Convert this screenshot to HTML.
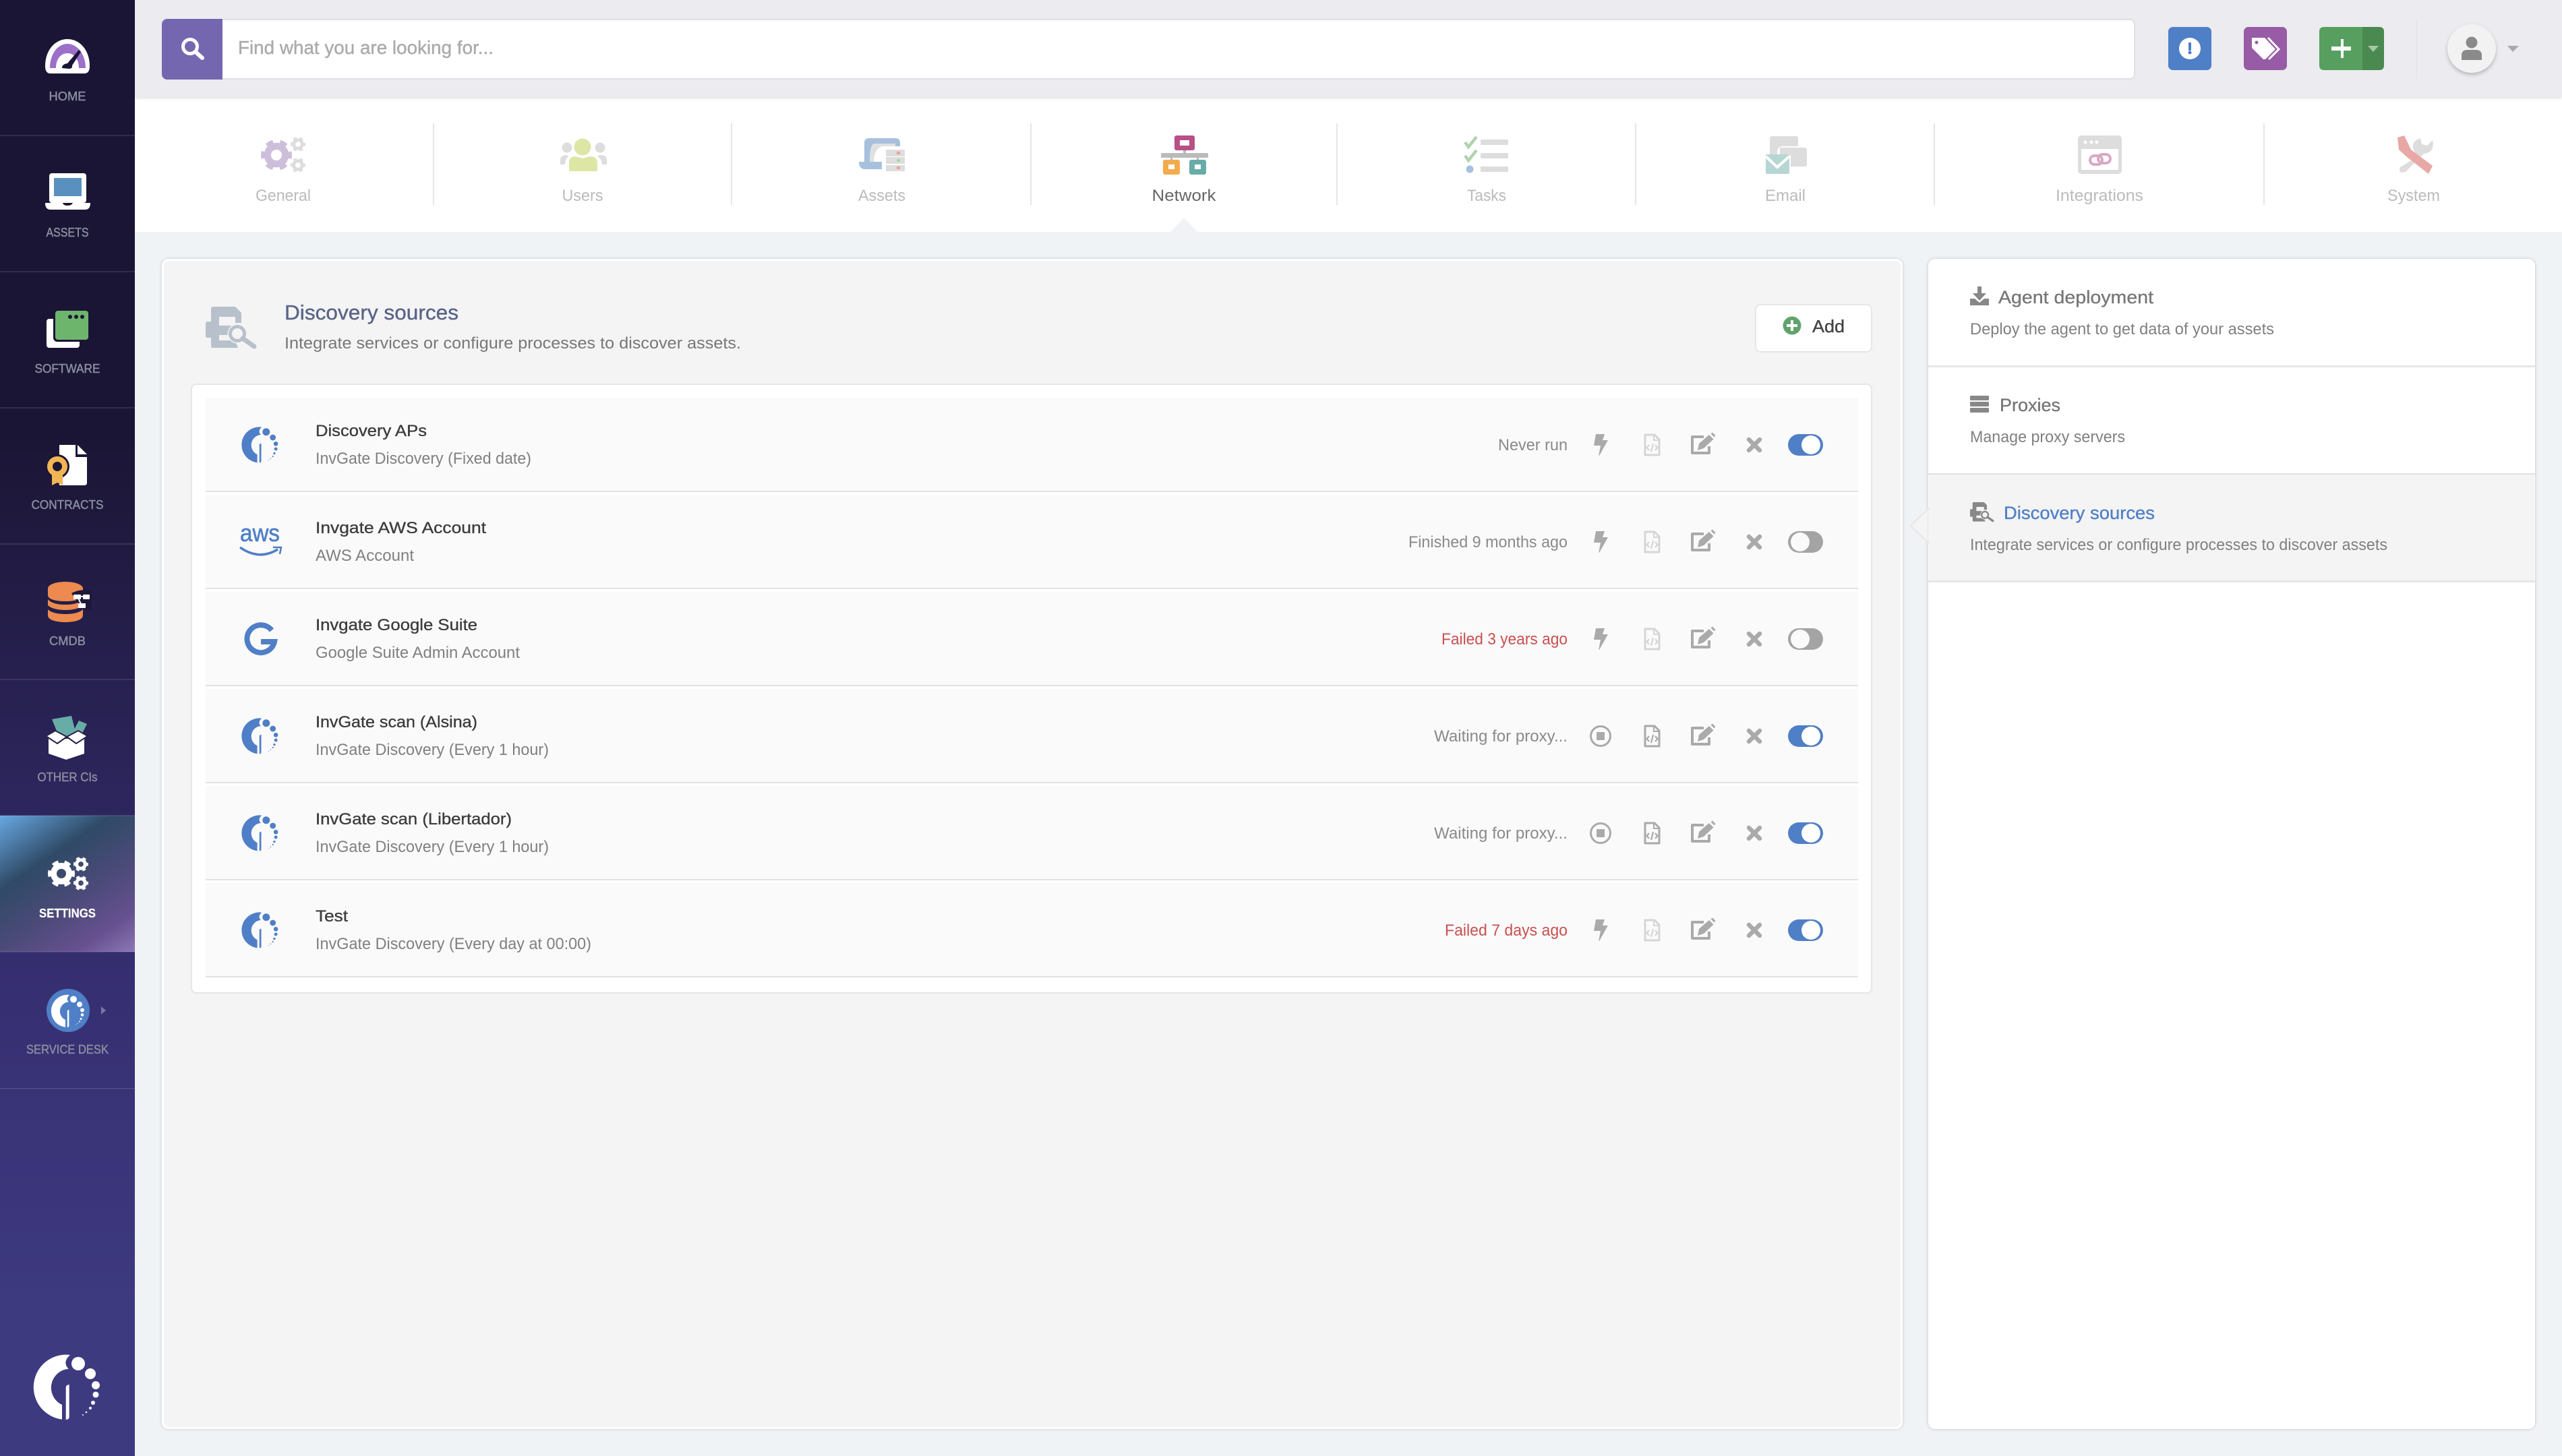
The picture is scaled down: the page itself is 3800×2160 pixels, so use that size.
<!DOCTYPE html>
<html lang="en"><head><meta charset="utf-8"><title>Discovery sources</title>
<style>
html,body{margin:0;padding:0;width:3800px;height:2160px;overflow:hidden;background:#eff3f6}
.a{position:absolute;box-sizing:border-box}
#side{left:0;top:0;width:200px;height:2160px;background:linear-gradient(180deg,#1b1535 0,#1b1535 30%,#362f72 68%,#3e3a80 90%,#3e3a80 100%)}
#set{left:0;top:1210px;width:200px;height:202px;background:linear-gradient(146deg,#68a8e2 0,#2f4a66 33%,#4a4a78 58%,#66508f 82%,#8d78b5 100%)}
.sd{left:0;width:200px;height:2px;background:rgba(255,255,255,.1)}
#top{left:200px;top:0;width:3600px;height:144px;background:#ebebf0;box-shadow:0 2px 4px rgba(0,0,0,.12);z-index:2}
#nav{left:200px;top:144px;width:3600px;height:200px;background:#fff}
.nd{top:183px;width:2px;height:121px;background:#e6e6e6}
#search{left:240px;top:28px;width:2927px;height:90px;background:#fff;border:2px solid #e0e0e4;border-radius:8px}
#sbtn{left:240px;top:28px;width:90px;height:90px;background:#7467b0;border-radius:8px 0 0 8px}
#main{left:240px;top:384px;width:2582px;height:1736px;background:#f4f4f4;border:3px solid #fff;border-radius:10px;box-shadow:0 0 5px rgba(0,0,0,.18)}
#card{left:283px;top:569px;width:2494px;height:905px;background:#fff;border:2px solid #e6e6e6;border-radius:8px}
.row{left:305px;width:2451px;background:#fafafa;border-bottom:2px solid #e2e2e2;height:140px}
#add{left:2603px;top:451px;width:174px;height:72px;background:#fff;border:2px solid #e6e6e6;border-radius:8px}
#right{left:2860px;top:384px;width:900px;height:1736px;background:#fff;border-radius:10px;box-shadow:0 0 5px rgba(0,0,0,.2)}
.rd{left:2860px;width:900px;height:3px;background:#e6e6e6}
#act{left:2861px;top:706px;width:898px;height:156px;background:#f4f4f4}
svg{position:absolute;left:0;top:0;z-index:3}
text{font-family:"Liberation Sans",Arial,sans-serif}
.sl{font-size:18px;fill:#8a8e9e;stroke:#8a8e9e;stroke-width:.45;text-anchor:middle}
.nl{font-size:24px;fill:#bbb;text-anchor:middle}
.t{font-size:24px;fill:#3c3c3c;stroke:#3c3c3c;stroke-width:.35}
.s{font-size:24px;fill:#808080}
.st{font-size:24px;fill:#8a8a8a;text-anchor:end}
.rt{font-size:27px;fill:#777;stroke:#777;stroke-width:.35}
</style></head><body>
<div class="a" id="side"></div>
<div class="a" id="set"></div>
<div class="a sd" style="top:200px"></div><div class="a sd" style="top:402px"></div><div class="a sd" style="top:604px"></div><div class="a sd" style="top:806px"></div><div class="a sd" style="top:1007px"></div><div class="a sd" style="top:1209px"></div><div class="a sd" style="top:1411px"></div><div class="a sd" style="top:1614px"></div>
<div class="a" id="nav"></div>
<div class="a nd" style="left:642px"></div><div class="a nd" style="left:1084px"></div><div class="a nd" style="left:1528px"></div><div class="a nd" style="left:1982px"></div><div class="a nd" style="left:2425px"></div><div class="a nd" style="left:2868px"></div><div class="a nd" style="left:3357px"></div>
<div class="a" id="top"></div>
<div class="a" id="search" style="z-index:3"></div>
<div class="a" id="sbtn" style="z-index:3"></div>
<div class="a" id="main"></div>
<div class="a" id="card"></div>
<div class="a row" style="top:590px"></div>
<div class="a row" style="top:734px"></div>
<div class="a row" style="top:878px"></div>
<div class="a row" style="top:1022px"></div>
<div class="a row" style="top:1166px"></div>
<div class="a row" style="top:1310px"></div>
<div class="a" id="add"></div>
<div class="a" id="right"></div>
<div class="a" id="act"></div>
<div class="a rd" style="top:542px"></div><div class="a rd" style="top:702px"></div><div class="a rd" style="top:861px"></div>

<svg width="3800" height="2160" viewBox="0 0 3800 2160" xmlns="http://www.w3.org/2000/svg">
<defs>
<g id="logo"><path d="M4-48A48 48 0 0 0-8 47.7V26A28 28 0 0 1 1.7-27.300Q-8-37 4-48Z"/><path d="M-2.300 0Q-2.300-3 2.700-4V44Q2.700 48-2.300 48Z"/><circle cx="16" cy="-35" r="10"/><circle cx="34" cy="-20" r="8"/><circle cx="42" cy="-3" r="6"/><circle cx="42" cy="11" r="4.500"/><circle cx="38" cy="23" r="3"/><circle cx="34" cy="31" r="2"/><circle cx="28" cy="37" r="1.300"/><circle cx="23" cy="41" r="1"/></g>
<g id="gear"><circle r="11.500" fill="none" stroke="currentColor" stroke-width="9"/><circle r="17" fill="none" stroke="currentColor" stroke-width="6" stroke-dasharray="9 8.800" stroke-dashoffset="4.500"/></g>
<g id="disc"><path d="M8 3Q8 0 11 0H44L53 9V24H44V15H20V28H38V42H20V50H44L48 61H11Q8 61 8 58V46H3Q0 46 0 43V25Q0 22 3 22H8Z" fill="currentColor"/><circle cx="47" cy="40" r="14.500" fill="#f4f4f4"/><circle cx="47" cy="40" r="10.500" fill="#f4f4f4" stroke="currentColor" stroke-width="5"/><path d="M55 47L72 59" stroke="currentColor" stroke-width="7" stroke-linecap="round"/></g>
<path id="bolt" d="M3 0H16L13 9H21L8 32Q7 32 7.500 30L10 17H0Z" fill="#aaa"/>
<g id="file"><path d="M2 1H16L23 8V31H2Z" fill="none" stroke="currentColor" stroke-width="3" stroke-linejoin="round"/><path d="M15 2V9H22" fill="none" stroke="currentColor" stroke-width="2"/><path d="M8 16L4.500 20 8 24M17 16L20.500 20 17 24M14 14L11 26" fill="none" stroke="currentColor" stroke-width="2.200"/></g>
<g id="edit"><path d="M19 4H2V28H27V18" fill="none" stroke="#aaa" stroke-width="4" stroke-linejoin="round"/><path d="M10 24L12 14 27 1 33.500 7.500 19 21Z M29.500-.5L32-2.500 36.500 2 34.500 4.500Z" fill="#aaa"/></g>
<path id="x" d="M3 3L19 19M19 3L3 19" stroke="#aaa" stroke-width="6.500" stroke-linecap="round" fill="none"/>
<g id="on"><rect width="52" height="32" rx="16" fill="#4f7fc6"/><circle cx="34" cy="16" r="14" fill="#fff"/></g>
<g id="off"><rect width="52" height="32" rx="16" fill="#a4a4a4"/><circle cx="18" cy="16" r="14" fill="#fafafa"/></g>
<g id="stop"><circle cx="16" cy="16" r="14.500" fill="none" stroke="#aaa" stroke-width="3"/><rect x="10" y="10" width="12" height="12" rx="1" fill="#aaa"/></g>
</defs>

<!-- sidebar icons -->
<path d="M67 98C67 74 82 58 100 58S133 74 133 98Q133 109 125 109H75Q67 109 67 98Z" fill="#fff"/>
<path d="M74 101C74 81 85 65 100 65S127 81 127 101H117C117 88 110 79 100 79S83 88 83 101Z" fill="#9c70c9"/>
<path d="M92 101Q92 95 100 94L117 74 120 77 107 97Q108 102 102 102Z" fill="#1b1535"/>
<rect x="73" y="257" width="55" height="44" rx="4" fill="#fff"/><rect x="80" y="264" width="41" height="27" fill="#5a90c0"/>
<path d="M67 301H134Q134 311 126 311H75Q67 311 67 301Z" fill="#fff"/><path d="M93 301H108Q106 305 100 305T93 301Z" fill="#1b1535"/>
<rect x="69" y="473" width="49" height="43" rx="4" fill="#fff"/><rect x="79" y="458" width="55" height="49" rx="6" fill="#1b1535"/><rect x="82" y="461" width="49" height="43" rx="4" fill="#6db56d"/>
<circle cx="104" cy="470" r="3" fill="#1b1535"/><circle cx="113" cy="470" r="3" fill="#1b1535"/><circle cx="122" cy="470" r="3" fill="#1b1535"/>
<path d="M88 660H112V678H129V716Q129 720 125 720H88Z" fill="#fff"/><path d="M115 660L129 674H115Z" fill="#fff"/>
<circle cx="85" cy="692" r="18" fill="#1b1535"/><path d="M77 700V720L85 716 93 720V700Z" fill="#f2b553"/><circle cx="85" cy="692" r="11" fill="none" stroke="#f2b553" stroke-width="8"/>
<ellipse cx="97" cy="873" rx="26" ry="10" fill="#ec8a50"/><path d="M71 873V883C71 889 83 892 97 892S123 889 123 883V873Z" fill="#ec8a50"/>
<path d="M71 889C76 895 86 897 97 897S118 895 123 889V898C118 903 107 905 97 905S76 903 71 898Z" fill="#ec8a50"/><path d="M71 904C76 909 86 911 97 911S118 909 123 904V913C123 920 110 923 97 923S71 920 71 913Z" fill="#ec8a50"/>
<path d="M106 880Q122 872 136 878V905H124Q112 890 106 880Z" fill="#1f1839"/>
<g fill="#fff"><rect x="109" y="882" width="11" height="7" rx="1"/><rect x="123" y="882" width="10" height="7" rx="1"/><rect x="116" y="895" width="11" height="7" rx="1"/></g><path d="M115 885H125M115 885L120 896" stroke="#fff" stroke-width="2"/>
<path d="M77 1067L106 1062 113 1090 88 1094ZM106 1090L117 1069 129 1074 120 1092Z" fill="#68aca8"/>
<path d="M72 1095L98 1096 125 1095V1118L98 1127 72 1118Z" fill="#fff"/>
<path d="M68 1092L82 1084 99 1093 85 1103ZM130 1092L116 1084 99 1093 113 1103Z" fill="#fff" stroke="#2a2145" stroke-width="2" stroke-linejoin="round"/>
<g color="#fff"><use href="#gear" x="91" y="1296"/><use href="#gear" transform="translate(120 1282) scale(.55)"/><use href="#gear" transform="translate(120 1310) scale(.55)"/></g>
<circle cx="101" cy="1499" r="32" fill="#4f7fc6"/><use href="#logo" transform="translate(101 1500) scale(.5)" fill="#fff"/>
<path d="M150 1493L157 1499 150 1505Z" fill="#7a76a8"/>
<use href="#logo" transform="translate(100 2058)" fill="#fff"/>

<text class="sl" x="100" y="149" textLength="55" lengthAdjust="spacingAndGlyphs">HOME</text>
<text class="sl" x="100" y="351" textLength="63" lengthAdjust="spacingAndGlyphs">ASSETS</text>
<text class="sl" x="100" y="553" textLength="97" lengthAdjust="spacingAndGlyphs">SOFTWARE</text>
<text class="sl" x="100" y="755" textLength="107" lengthAdjust="spacingAndGlyphs">CONTRACTS</text>
<text class="sl" x="100" y="957" textLength="54" lengthAdjust="spacingAndGlyphs">CMDB</text>
<text class="sl" x="100" y="1159" textLength="89" lengthAdjust="spacingAndGlyphs">OTHER CIs</text>
<text class="sl" x="100" y="1361" textLength="84" lengthAdjust="spacingAndGlyphs" style="fill:#fff;stroke:#fff;font-weight:bold;stroke-width:.2">SETTINGS</text>
<text class="sl" x="100" y="1563" textLength="122" lengthAdjust="spacingAndGlyphs">SERVICE DESK</text>

<!-- top bar -->
<circle cx="282" cy="69" r="10.500" fill="none" stroke="#fff" stroke-width="5"/><path d="M290 77L300 86" stroke="#fff" stroke-width="6" stroke-linecap="round"/>
<text x="353" y="80" font-size="28" fill="#aaa" stroke="#aaa" stroke-width=".4" textLength="379" lengthAdjust="spacingAndGlyphs">Find what you are looking for...</text>
<rect x="3216" y="40" width="64" height="64" rx="7" fill="#4f7fc6"/><circle cx="3248" cy="72" r="16" fill="#fff"/><rect x="3246" y="63" width="4" height="12" fill="#4f7fc6"/><circle cx="3248" cy="78" r="2.500" fill="#4f7fc6"/>
<rect x="3328" y="40" width="64" height="64" rx="7" fill="#975ca5"/>
<path d="M3340 56H3359L3375 73 3360 88H3357L3340 71Z" fill="#fff"/><circle cx="3347" cy="63" r="2.500" fill="#975ca5"/><path d="M3364 56L3380 73 3365 88" fill="none" stroke="#fff" stroke-width="3"/>
<path d="M3447 40H3504V104H3447Q3440 104 3440 97V47Q3440 40 3447 40Z" fill="#579f5e"/><path d="M3504 40H3529Q3536 40 3536 47V97Q3536 104 3529 104H3504Z" fill="#4a8950"/>
<path d="M3472 58H3476V69H3487V75H3476V86H3472V75H3458V69H3472Z" fill="#fff"/><path d="M3512 68H3528L3520 77Z" fill="#a5c9a8"/>
<rect x="3584" y="28" width="1" height="88" fill="#e2e2e6"/>
<circle cx="3666" cy="72" r="36" fill="#f2f2f2" style="filter:drop-shadow(0 3px 3px rgba(0,0,0,.22))"/>
<ellipse cx="3666" cy="63" rx="8.500" ry="8.500" fill="#8a8a8a"/><path d="M3651 89V82Q3651 74 3660 74H3672Q3681 74 3681 82V89Z" fill="#8a8a8a"/>
<path d="M3719 68H3736L3727 77Z" fill="#aaa"/>

<!-- nav icons -->
<use href="#gear" transform="translate(410 230) scale(1.150)" color="#cdbfdc"/>
<g color="#ddd"><use href="#gear" transform="translate(442 214) scale(.55)"/><use href="#gear" transform="translate(442 245) scale(.55)"/></g>
<text class="nl" x="420" y="298" textLength="82" lengthAdjust="spacingAndGlyphs">General</text>

<circle cx="864" cy="218" r="12.500" fill="#dde6a5"/><path d="M844 254V242Q844 232 853 232L864 235 875 232Q886 232 886 242V254Z" fill="#dde6a5"/>
<g fill="#ddd"><circle cx="841" cy="219" r="7.500"/><circle cx="890" cy="219" r="7.500"/><path d="M831 244V237Q831 230 841 230L843 232Q838 236 838 244ZM900 244V237Q900 230 890 230L886 232Q893 236 893 244Z"/></g>
<text class="nl" x="864" y="298" textLength="61" lengthAdjust="spacingAndGlyphs">Users</text>

<path d="M1289 205H1328Q1335 205 1335 212V217H1328V213H1296Q1290 216 1290 240H1308V251H1283Q1274 251 1274 240H1282V212Q1282 205 1289 205Z" fill="#a7c1dd"/>
<path d="M1290 240Q1290 216 1296 213H1328V217H1308Q1296 222 1296 240Z" fill="#e0e0e0"/>
<g fill="#ddd"><rect x="1314" y="222" width="28" height="10" rx="1"/><rect x="1314" y="233" width="28" height="10" rx="1"/><rect x="1314" y="245" width="28" height="9" rx="1"/></g>
<rect x="1330" y="225" width="5" height="4" fill="#eea0a0"/><rect x="1330" y="236" width="5" height="4" fill="#a8d8a8"/><rect x="1330" y="247" width="5" height="4" fill="#eea0a0"/>
<text class="nl" x="1308" y="298" textLength="70" lengthAdjust="spacingAndGlyphs">Assets</text>

<rect x="1742" y="201" width="30" height="22" rx="3" fill="#b84f86"/><rect x="1750" y="208" width="14" height="8" fill="#fff"/>
<rect x="1755" y="223" width="4" height="5" fill="#bbb"/><rect x="1722" y="227" width="70" height="7" rx="1" fill="#bbb"/><rect x="1736" y="233" width="3" height="5" fill="#bbb"/><rect x="1775" y="233" width="3" height="5" fill="#bbb"/>
<rect x="1725" y="237" width="25" height="22" rx="3" fill="#f2ab4d"/><rect x="1733" y="244" width="9" height="7" fill="#fff"/>
<rect x="1764" y="237" width="25" height="22" rx="3" fill="#68aca8"/><rect x="1772" y="244" width="9" height="7" fill="#fff"/>
<text class="nl" x="1756" y="298" textLength="95" lengthAdjust="spacingAndGlyphs" style="fill:#666">Network</text>

<path d="M2173 211L2178 218 2190 203" fill="none" stroke="#b1d2ae" stroke-width="4.500"/><path d="M2173 231L2178 238 2190 223" fill="none" stroke="#b1d2ae" stroke-width="4.500"/>
<circle cx="2180" cy="251" r="5.500" fill="#a7c1dd"/>
<g fill="#ddd"><rect x="2196" y="207" width="41" height="8" rx="1"/><rect x="2196" y="227" width="41" height="8" rx="1"/><rect x="2196" y="247" width="41" height="8" rx="1"/></g>
<text class="nl" x="2205" y="298" textLength="58" lengthAdjust="spacingAndGlyphs">Tasks</text>

<path d="M2625 205Q2625 202 2628 202H2664Q2667 202 2667 205V217H2645Q2636 217 2636 226V229H2625Z" fill="#ddd"/>
<path d="M2640 219H2677Q2680 219 2680 222V244Q2680 247 2677 247H2656V230H2640Z" fill="#ddd"/>
<rect x="2619" y="229" width="35" height="29" rx="2" fill="#b6d6d4"/><path d="M2619 232L2636 248 2654 232" fill="none" stroke="#fff" stroke-width="4"/>
<text class="nl" x="2648" y="298" textLength="60" lengthAdjust="spacingAndGlyphs">Email</text>

<rect x="3082" y="201" width="65" height="57" rx="5" fill="#ddd"/><rect x="3087" y="221" width="55" height="31" fill="#fff"/>
<g fill="#fff"><circle cx="3093" cy="211" r="2.500"/><circle cx="3102" cy="211" r="2.500"/><circle cx="3110" cy="211" r="2.500"/></g>
<rect x="3100" y="231" width="18" height="13" rx="6.500" fill="none" stroke="#d9a9c4" stroke-width="4"/><rect x="3112" y="229" width="18" height="13" rx="6.500" fill="none" stroke="#d9a9c4" stroke-width="4"/>
<text class="nl" x="3114" y="298" textLength="130" lengthAdjust="spacingAndGlyphs">Integrations</text>

<path d="M3590 205Q3570 212 3586 232L3560 248Q3556 258 3568 255L3595 228Q3612 226 3608 208L3600 216 3592 214Z" fill="#ddd"/>
<path d="M3556 204L3566 201 3576 222 3608 246 3602 258 3569 232 3558 222Z" fill="#e8a8a5"/>
<text class="nl" x="3580" y="298" textLength="78" lengthAdjust="spacingAndGlyphs">System</text>

<path d="M1736 344L1756 323 1776 344Z" fill="#eff3f6"/>

<!-- main header -->
<use href="#disc" x="305" y="455" color="#b8c1cb"/>
<text x="422" y="474" font-size="31" fill="#5a6488" stroke="#5a6488" stroke-width=".4" textLength="258" lengthAdjust="spacingAndGlyphs">Discovery sources</text>
<text x="422" y="517" font-size="24" fill="#777" textLength="677" lengthAdjust="spacingAndGlyphs">Integrate services or configure processes to discover assets.</text>
<circle cx="2658" cy="483" r="13.500" fill="#62a36c"/><path d="M2656 475H2660V481H2666V485H2660V491H2656V485H2650V481H2656Z" fill="#fff"/>
<text x="2688" y="493" font-size="26" fill="#444" stroke="#444" stroke-width=".35" textLength="48" lengthAdjust="spacingAndGlyphs">Add</text>

<!-- row 1 -->
<use href="#logo" transform="translate(386 660) scale(.55)" fill="#4f7fc6"/>
<text class="t" x="468" y="647" textLength="165" lengthAdjust="spacingAndGlyphs">Discovery APs</text>
<text class="s" x="468" y="688" textLength="320" lengthAdjust="spacingAndGlyphs">InvGate Discovery (Fixed date)</text>
<text class="st" x="2325" y="668" textLength="103" lengthAdjust="spacingAndGlyphs">Never run</text>
<use href="#bolt" x="2364" y="644"/><use href="#file" x="2438" y="644" color="#d6d6d6"/><use href="#edit" x="2508" y="644"/><use href="#x" x="2591" y="649"/><use href="#on" x="2652" y="644"/>
<!-- row 2 -->
<text x="356" y="803" font-size="36" fill="#4f7fc6" stroke="#4f7fc6" stroke-width=".6" textLength="59" lengthAdjust="spacingAndGlyphs">aws</text>
<path d="M356 812Q384 832 412 815" fill="none" stroke="#4f7fc6" stroke-width="3.500"/><path d="M405 812L417 812 415 822" fill="none" stroke="#4f7fc6" stroke-width="2.500"/>
<text class="t" x="468" y="791" textLength="253" lengthAdjust="spacingAndGlyphs">Invgate AWS Account</text>
<text class="s" x="468" y="832" textLength="146" lengthAdjust="spacingAndGlyphs">AWS Account</text>
<text class="st" x="2325" y="812" textLength="236" lengthAdjust="spacingAndGlyphs">Finished 9 months ago</text>
<use href="#bolt" x="2364" y="788"/><use href="#file" x="2438" y="788" color="#d6d6d6"/><use href="#edit" x="2508" y="788"/><use href="#x" x="2591" y="793"/><use href="#off" x="2652" y="788"/>
<!-- row 3 -->
<path d="M403 935A20.500 20.500 0 1 0 407 952H387" fill="none" stroke="#4f7fc6" stroke-width="8"/>
<text class="t" x="468" y="935" textLength="240" lengthAdjust="spacingAndGlyphs">Invgate Google Suite</text>
<text class="s" x="468" y="976" textLength="303" lengthAdjust="spacingAndGlyphs">Google Suite Admin Account</text>
<text class="st" x="2325" y="956" textLength="187" lengthAdjust="spacingAndGlyphs" style="fill:#c9504f">Failed 3 years ago</text>
<use href="#bolt" x="2364" y="932"/><use href="#file" x="2438" y="932" color="#d6d6d6"/><use href="#edit" x="2508" y="932"/><use href="#x" x="2591" y="937"/><use href="#off" x="2652" y="932"/>
<!-- row 4 -->
<use href="#logo" transform="translate(386 1092) scale(.55)" fill="#4f7fc6"/>
<text class="t" x="468" y="1079" textLength="240" lengthAdjust="spacingAndGlyphs">InvGate scan (Alsina)</text>
<text class="s" x="468" y="1120" textLength="346" lengthAdjust="spacingAndGlyphs">InvGate Discovery (Every 1 hour)</text>
<text class="st" x="2325" y="1100" textLength="198" lengthAdjust="spacingAndGlyphs">Waiting for proxy...</text>
<use href="#stop" x="2358" y="1076"/><use href="#file" x="2438" y="1076" color="#aaa"/><use href="#edit" x="2508" y="1076"/><use href="#x" x="2591" y="1081"/><use href="#on" x="2652" y="1076"/>
<!-- row 5 -->
<use href="#logo" transform="translate(386 1236) scale(.55)" fill="#4f7fc6"/>
<text class="t" x="468" y="1223" textLength="291" lengthAdjust="spacingAndGlyphs">InvGate scan (Libertador)</text>
<text class="s" x="468" y="1264" textLength="346" lengthAdjust="spacingAndGlyphs">InvGate Discovery (Every 1 hour)</text>
<text class="st" x="2325" y="1244" textLength="198" lengthAdjust="spacingAndGlyphs">Waiting for proxy...</text>
<use href="#stop" x="2358" y="1220"/><use href="#file" x="2438" y="1220" color="#aaa"/><use href="#edit" x="2508" y="1220"/><use href="#x" x="2591" y="1225"/><use href="#on" x="2652" y="1220"/>
<!-- row 6 -->
<use href="#logo" transform="translate(386 1380) scale(.55)" fill="#4f7fc6"/>
<text class="t" x="468" y="1367" textLength="48" lengthAdjust="spacingAndGlyphs">Test</text>
<text class="s" x="468" y="1408" textLength="409" lengthAdjust="spacingAndGlyphs">InvGate Discovery (Every day at 00:00)</text>
<text class="st" x="2325" y="1388" textLength="182" lengthAdjust="spacingAndGlyphs" style="fill:#c9504f">Failed 7 days ago</text>
<use href="#bolt" x="2364" y="1364"/><use href="#file" x="2438" y="1364" color="#d6d6d6"/><use href="#edit" x="2508" y="1364"/><use href="#x" x="2591" y="1369"/><use href="#on" x="2652" y="1364"/>

<!-- right panel -->
<path d="M2933 425H2939V435H2946L2936 446 2926 435H2933Z" fill="#888"/><path d="M2922 443H2929L2936 449 2943 443H2950V453H2922Z" fill="#888"/>
<text class="rt" x="2964" y="450" textLength="230" lengthAdjust="spacingAndGlyphs">Agent deployment</text>
<text class="s" x="2922" y="496" textLength="451" lengthAdjust="spacingAndGlyphs">Deploy the agent to get data of your assets</text>
<g fill="#888"><rect x="2922" y="587" width="28" height="7" rx="1"/><rect x="2922" y="596" width="28" height="7" rx="1"/><rect x="2922" y="605" width="28" height="7" rx="1"/></g>
<text class="rt" x="2966" y="610" textLength="90" lengthAdjust="spacingAndGlyphs">Proxies</text>
<text class="s" x="2922" y="656" textLength="230" lengthAdjust="spacingAndGlyphs">Manage proxy servers</text>
<use href="#disc" transform="translate(2922 745) scale(.47)" color="#888"/>
<text class="rt" x="2972" y="770" textLength="224" lengthAdjust="spacingAndGlyphs" style="fill:#4f7fc6;stroke:#4f7fc6">Discovery sources</text>
<text class="s" x="2922" y="816" textLength="619" lengthAdjust="spacingAndGlyphs">Integrate services or configure processes to discover assets</text>
<path d="M2860 755L2834 780 2860 805Z" fill="#f4f4f4" stroke="#e6e6e6" stroke-width="2"/><rect x="2860" y="757" width="3" height="46" fill="#f4f4f4"/>
</svg>
</body></html>
